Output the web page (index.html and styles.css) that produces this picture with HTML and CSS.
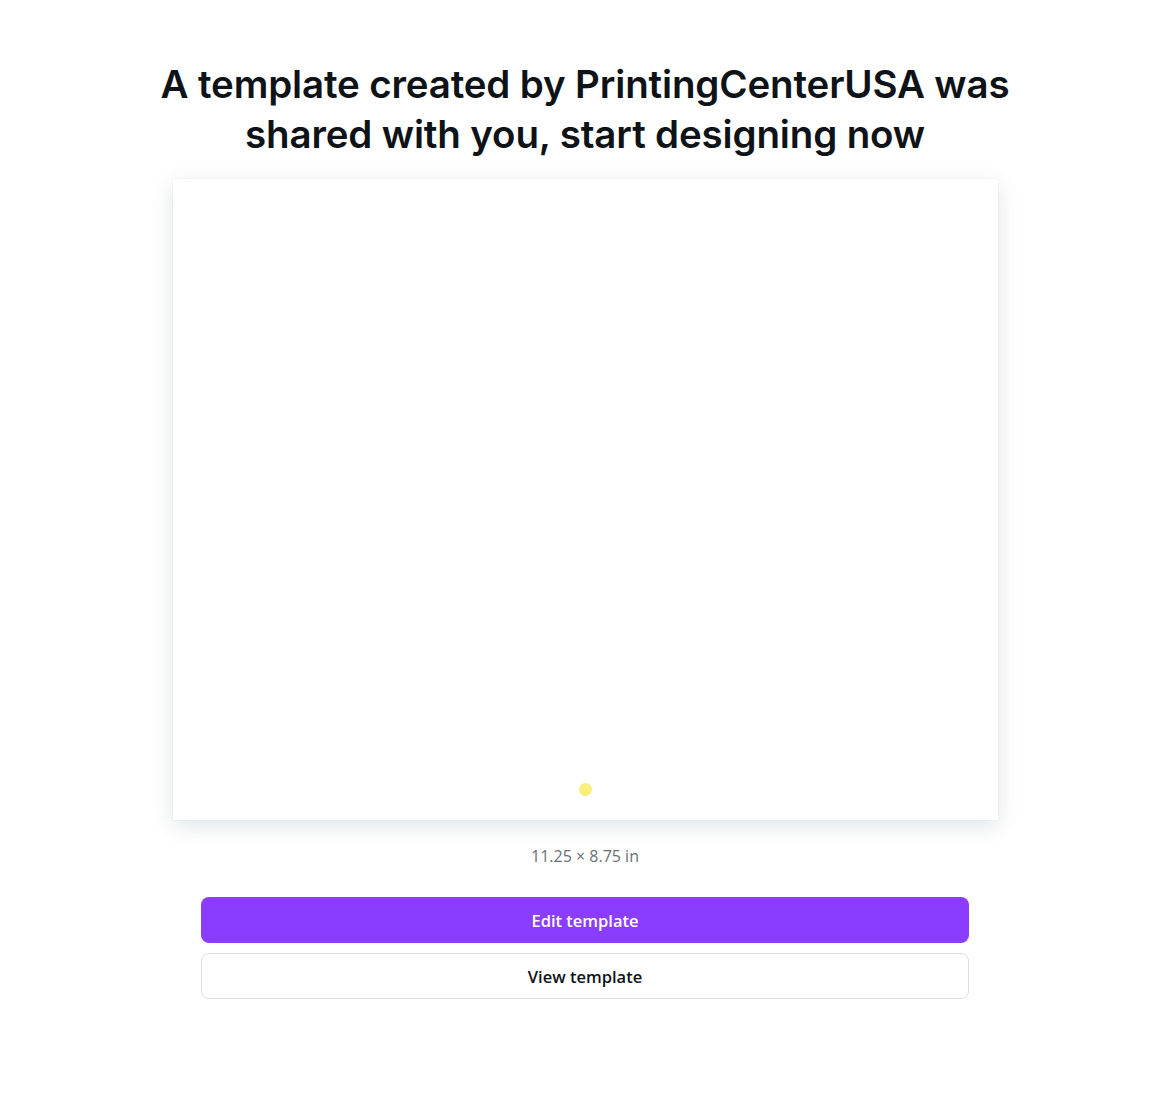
FILE: index.html
```html
<!DOCTYPE html>
<html>

<head>
  <meta charset="utf-8">
  <title>Shared template</title>
  <link rel="stylesheet" href="styles.css">
</head>

<body>
  <div class="share-page">
    <h1 class="share-title">A template created by PrintingCenterUSA was shared with you, start designing now</h1>

    <div class="preview-card">
      <span class="preview-dot"></span>
    </div>

    <div class="preview-size">11.25 × 8.75 in</div>

    <div class="actions">
      <button class="btn btn-primary">Edit template</button>
      <button class="btn btn-secondary">View template</button>
    </div>
  </div>
</body>

</html>
```

FILE: styles.css
```css
body {
  margin: 0;
  background: #fff;
  color: #0e1318;
  font-family: 'Open Sans', 'Liberation Sans', sans-serif;
}

.share-page {
  display: flex;
  flex-direction: column;
  align-items: center;
  padding-top: 59px;
}

.share-title {
  margin: 0;
  width: 900px;
  text-align: center;
  font-family: 'Inter', 'Liberation Sans', sans-serif;
  font-size: 38.5px;
  font-weight: 600;
  line-height: 50px;
  letter-spacing: -0.15px;
  color: #0e1318;
}

.preview-card {
  margin-top: 20px;
  width: 825px;
  height: 641px;
  box-sizing: border-box;
  background: #fff;
  box-shadow: 0 0 1px rgba(0, 0, 0, 0.12), 0 6px 20px rgba(53, 71, 90, 0.15);
  display: flex;
  flex-direction: column;
  justify-content: flex-end;
  align-items: center;
  padding-bottom: 24px;
}

.preview-dot {
  width: 13px;
  height: 13px;
  border-radius: 50%;
  background: #f9ef7c;
}

.preview-size {
  margin-top: 24px;
  font-size: 16px;
  line-height: 24px;
  color: #6b6f76;
}

.actions {
  margin-top: 29px;
  width: 768px;
  display: flex;
  flex-direction: column;
  gap: 10px;
}

.btn {
  height: 46px;
  border-radius: 8px;
  font-family: 'Open Sans', 'Liberation Sans', sans-serif;
  font-size: 16.5px;
  font-weight: 600;
  cursor: pointer;
}

.btn-primary {
  border: none;
  background: #8b3dff;
  color: #fff;
}

.btn-secondary {
  border: 1px solid #dcdde0;
  background: #fff;
  color: #0e1318;
}
```
